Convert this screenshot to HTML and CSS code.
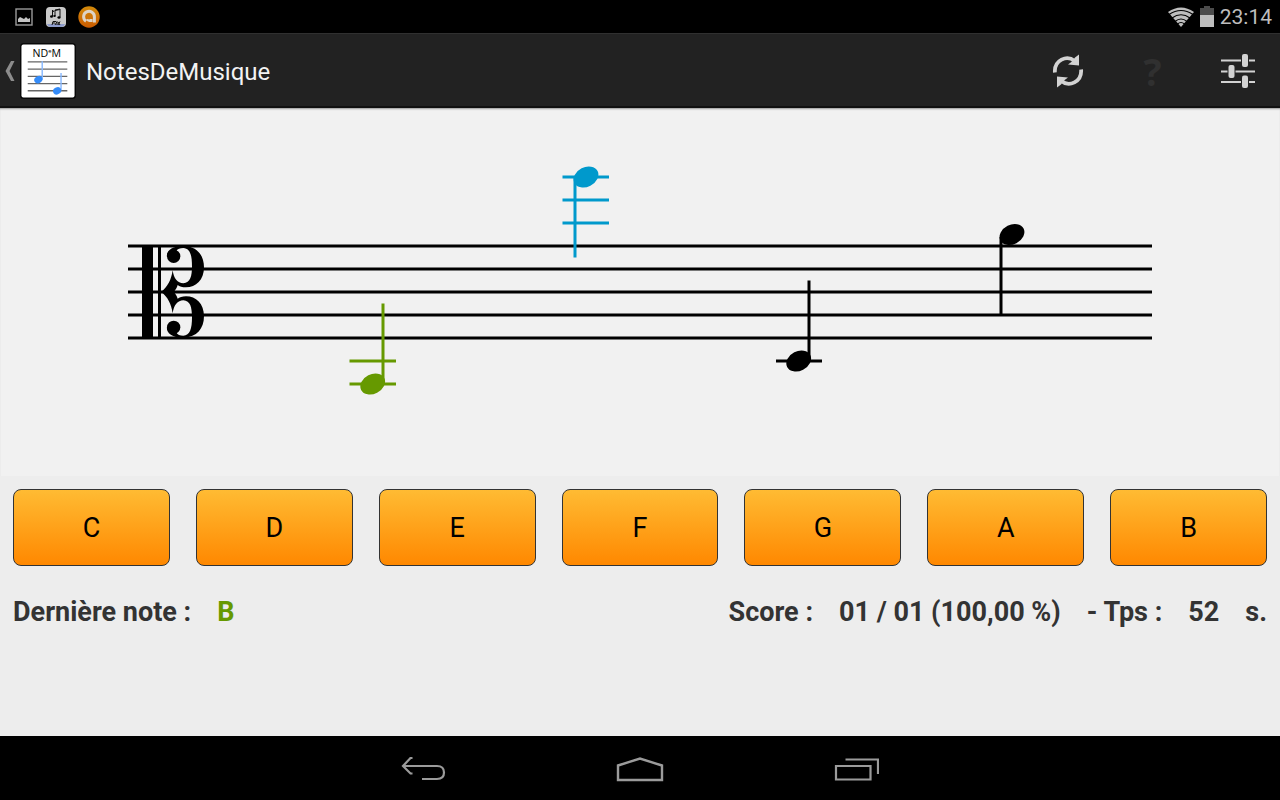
FILE: index.html
```html
<!DOCTYPE html>
<html lang="fr">
<head>
<meta charset="utf-8">
<meta name="viewport" content="width=device-width, initial-scale=1">
<title>NotesDeMusique</title>
<link rel="stylesheet" href="styles.css">
</head>
<body>
<div class="status-bar">
  <div class="notifications">
    <svg width="20" height="20" viewBox="0 0 20 20" aria-hidden="true">
      <rect x="2" y="2" width="16" height="16" fill="none" stroke="#9a9a9a" stroke-width="1.4"/>
      <path d="M4 15V12L6 10L8 11L10 12L12 10L14 12L16 11V15Z" fill="#c4c4c4"/>
    </svg>
    <svg width="20" height="20" viewBox="0 0 20 20" aria-hidden="true">
      <rect width="20" height="20" rx="4" fill="#c9c9c9"/>
      <path d="M1 17H19Q18 20 15 20H5Q2 20 1 17Z" fill="#8f9dcc"/>
      <path d="M6.500 9V3M6.500 3L8 5M9 9V3L14 2V10M9 3.500L14 2.500" fill="none" stroke="#111"/>
      <ellipse cx="5.500" cy="9.500" rx="1.500" ry="1.200"/><ellipse cx="8.500" cy="9" rx="1.300" ry="1"/><ellipse cx="13" cy="10.500" rx="1.600" ry="1.200"/>
      <path d="M6 18L7 14.500H10M6.500 16H9M9 18L11 14.500V18M12 18L14 14.500M14 18L12 15" fill="none" stroke="#111"/>
    </svg>
    <svg width="22" height="22" viewBox="0 0 22 22" aria-hidden="true">
      <defs><linearGradient id="badge" x1="0" y1="0" x2="0" y2="1"><stop offset="0" stop-color="#d28a0a"/><stop offset="1" stop-color="#c95a00"/></linearGradient></defs>
      <circle cx="11" cy="11" r="10.700" fill="url(#badge)"/>
      <path d="M8 15.200A5.400 5.400 0 1 1 16.400 11V16.500M14.500 14.500H11.500A3 3 0 0 1 9.500 13" fill="none" stroke="#ddd3c6" stroke-width="3"/>
      <circle cx="11" cy="11" r="2.400" fill="#cc750a"/>
    </svg>
  </div>
  <div class="system">
    <svg width="26" height="20" viewBox="0 0 26 20" aria-hidden="true">
      <path d="M0 5Q13 -4 26 5L13 20Z" fill="#bebebe"/>
      <path d="M1 7.500Q13 -.5 25 7.500M4 11Q13 4.500 22 11M7 14.500Q13 9.500 19 14.500M9.500 17Q13 14 16.500 17" fill="none" stroke="#000" stroke-width="1.100"/>
    </svg>
    <svg width="14" height="21" viewBox="0 0 14 21" aria-hidden="true">
      <path d="M4 0H10V2H14V9H0V2H4Z" fill="#4c4c4c"/><path d="M0 9H14V21H0Z" fill="#bebebe"/>
    </svg>
    <time class="clock">23:14</time>
  </div>
</div>

<header class="action-bar">
  <a class="home-link" href="#" aria-label="Retour">
    <svg width="10" height="20" viewBox="0 0 10 20" aria-hidden="true"><path d="M6 0H9.500L4.500 10L9.500 20H6L.5 10Z" fill="#8c8c8c"/></svg>
    <svg width="56" height="56" viewBox="0 0 58 58" aria-hidden="true">
      <rect x="0" y="0" width="58" height="58" rx="4" fill="#080808"/>
      <rect x="1.500" y="1.500" width="55" height="55" rx="2" fill="#fff"/>
      <text class="logo-text" x="13" y="14">ND<tspan class="logo-small" dy="-4">e</tspan><tspan dy="4">M</tspan></text>
      <path d="M8 19.500H49M8 27H49M8 34.500H49M8 42H49M8 49.500H49" stroke="#666" stroke-width="1.400"/>
      <path d="M23 19V38M42.500 31V49" stroke="#8abaff" stroke-width="1.500"/>
      <ellipse cx="19" cy="38" rx="4.400" ry="3.600" transform="rotate(-30 19 38)" fill="#348bf8"/>
      <ellipse cx="38.500" cy="49.500" rx="4.400" ry="3.600" transform="rotate(-30 38.500 49.500)" fill="#348bf8"/>
    </svg>
  </a>
  <h1 class="title">NotesDeMusique</h1>
  <div class="actions">
    <button class="action" type="button" aria-label="Recommencer">
      <svg width="32" height="34" viewBox="0 0 32 34" aria-hidden="true">
        <g fill="none" stroke="#d2d2d2" stroke-width="3.800"><path d="M2.900 18.500C2 6 15 .5 22.500 7"/><path d="M29.100 15.500C30 28 17 33.500 9.500 27"/></g>
        <path d="M27 .5V11.500L16 10.500L20 7.500L23 3.500Z" fill="#d2d2d2"/><path d="M5 33.500V22.500L16 23.500L12 26.500L9 30.500Z" fill="#d2d2d2"/>
      </svg>
    </button>
    <button class="action help" type="button" disabled>?</button>
    <button class="action" type="button" aria-label="Réglages">
      <svg width="34" height="34" viewBox="0 0 34 34" aria-hidden="true">
        <g fill="#d2d2d2">
          <path d="M0 5.500H20V7.500H0ZM28 5.500H34V7.500H28ZM0 16.500H6.500V18.500H0ZM14.500 16.500H34V18.500H14.500ZM0 27H20V29H0ZM28 27H34V29H28Z"/>
          <rect x="21" y="0" width="6" height="13" rx="2"/><rect x="7.500" y="11" width="6" height="13" rx="2"/><rect x="21" y="21.500" width="6" height="12.500" rx="2"/>
        </g>
      </svg>
    </button>
  </div>
</header>

<main class="game">
  <section class="score-sheet" aria-label="Portée">
    <svg class="staff" viewBox="0 0 1280 368" role="img" aria-label="Clé d'ut et quatre notes">
      <path d="M128 138H1152M128 161H1152M128 184H1152M128 207H1152M128 230H1152" stroke="#000" stroke-width="3"/>
      <path d="M142 137H153V231H142ZM158 137H161V231H158Z"/>
      <g transform="translate(120 127) scale(.3333)">
        <g id="clef-half">
          <circle cx="161" cy="64" r="20"/>
          <path d="M141 66C137 44 164 31 192 33C230 34 252 60 252 97C252 136 228 157 198 157C187 157 178 154 173 150C171 158 166 164 162 171H123C143 156 154 134 158 106C161 130 173 145 190 145C211 144 216 124 216 94C216 59 210 40 190 39C180 39 172 42 170 47Z"/>
        </g>
        <use href="#clef-half" transform="translate(0 341) scale(1 -1)"/>
      </g>
      <g fill="#690" stroke="#690" stroke-width="3">
        <path d="M349.500 253H396M349.500 276H396M383 195.500V276" fill="none"/>
        <ellipse cx="372.700" cy="276" rx="13" ry="9.700" stroke="none" transform="rotate(-27 372.700 276)"/>
      </g>
      <g fill="#09c" stroke="#09c" stroke-width="3">
        <path d="M562.500 69H609M562.500 92H609M562.500 115H609M575 69V149.500" fill="none"/>
        <ellipse cx="586" cy="69" rx="13" ry="9.700" stroke="none" transform="rotate(-27 586 69)"/>
      </g>
      <g stroke="#000" stroke-width="3">
        <path d="M776 253H822M809 172.500V253M1001 129V207" fill="none"/>
        <ellipse cx="798.700" cy="253" rx="13" ry="9.700" stroke="none" transform="rotate(-27 798.700 253)"/>
        <ellipse cx="1012" cy="126.500" rx="13" ry="9.700" stroke="none" transform="rotate(-27 1012 126.500)"/>
      </g>
    </svg>
  </section>
  <section class="answers">
    <div class="keys">
      <button class="key" type="button">C</button>
      <button class="key" type="button">D</button>
      <button class="key" type="button">E</button>
      <button class="key" type="button">F</button>
      <button class="key" type="button">G</button>
      <button class="key" type="button">A</button>
      <button class="key" type="button">B</button>
    </div>
    <div class="results">
      <span>Dernière note :</span><span class="last-note">B</span>
      <span class="score-label">Score :</span><span>01 / 01 (100,00 %)</span>
      <span>- Tps :</span><span>52</span><span>s.</span>
    </div>
  </section>
</main>

<nav class="nav-bar" aria-label="Système">
  <button class="nav-button" type="button" aria-label="Précédent">
    <svg width="46" height="26" viewBox="0 0 46 26" aria-hidden="true"><path d="M11.500 1H9.500L2 9L9.500 16.500H11.500M2 9H36Q43 9 43 15.500Q43 22 36 22H21" fill="none" stroke="#9b9b9b" stroke-width="2.200"/></svg>
  </button>
  <button class="nav-button" type="button" aria-label="Accueil">
    <svg width="48" height="26" viewBox="0 0 48 26" aria-hidden="true"><path d="M2 23V8.500L24 1.500L46 8.500V23Z" fill="none" stroke="#9b9b9b" stroke-width="2.400"/></svg>
  </button>
  <button class="nav-button" type="button" aria-label="Applications récentes">
    <svg width="46" height="26" viewBox="0 0 46 26" aria-hidden="true"><path d="M3 9H37.500V22.500H3ZM12.500 2.500H45V17" fill="none" stroke="#9b9b9b" stroke-width="2.200"/></svg>
  </button>
</nav>
</body>
</html>
```

FILE: styles.css
```css
* {
  box-sizing: border-box;
}

body {
  margin: 0;
  min-height: 100vh;
  display: flex;
  flex-direction: column;
  background: #ededed;
  color: #333;
  font-family: Roboto, "Noto Sans", sans-serif;
}

button {
  margin: 0;
  padding: 0;
  border: 0;
  background: none;
  font: inherit;
}

svg {
  display: block;
}

.status-bar {
  display: flex;
  align-items: center;
  justify-content: space-between;
  height: 33px;
  padding: 0 8px 0 14px;
  background: #000;
}

.notifications {
  display: flex;
  align-items: center;
  gap: 12px;
}

.system {
  display: flex;
  align-items: center;
  gap: 6px;
}

.clock {
  color: #bebebe;
  font-size: 21px;
  line-height: 32px;
}

.action-bar {
  display: flex;
  align-items: center;
  height: 75px;
  padding-top: 1px;
  background: #222;
  border-top: 1px solid #303030;
  border-bottom: 2px solid #111;
}

.home-link {
  display: flex;
  align-items: center;
  gap: 5px;
  padding-left: 5px;
}

.logo-text {
  font-family: "Open Sans", sans-serif;
  font-size: 11px;
}

.logo-small {
  font-size: 6px;
}

.title {
  margin: 2px 0 0 10px;
  color: #f3f3f3;
  font-size: 24px;
  font-weight: 400;
  line-height: 32px;
}

.actions {
  display: flex;
  align-self: stretch;
  margin-left: auto;
}

.action {
  display: flex;
  align-items: center;
  justify-content: center;
  width: 85px;
}

.help {
  color: #303030;
  font-family: "Open Sans", sans-serif;
  font-size: 38px;
  font-weight: 700;
}

.game {
  flex: 1;
  display: flex;
  flex-direction: column;
}

.score-sheet {
  flex: 1;
  background: #f1f1f1;
  box-shadow: inset 0 2px 2px -1px #999;
}

.staff {
  width: 100%;
  height: auto;
}

.answers {
  padding: 13px 13px 108px;
}

.keys {
  display: grid;
  grid-template-columns: repeat(7, 1fr);
  gap: 26px;
}

.key {
  height: 77px;
  border: 1px solid #333;
  border-radius: 8px;
  background: linear-gradient(#fb3, #f80);
  color: #000;
  font-size: 27px;
}

.results {
  display: flex;
  gap: 26px;
  margin-top: 30px;
  font-size: 27px;
  font-weight: 700;
  line-height: 32px;
  white-space: nowrap;
}

.last-note {
  color: #690;
}

.score-label {
  margin-left: auto;
}

.nav-bar {
  display: flex;
  justify-content: center;
  height: 64px;
  background: #000;
}

.nav-button {
  display: flex;
  align-items: center;
  justify-content: center;
  width: 216px;
  padding-top: 3px;
}
```
